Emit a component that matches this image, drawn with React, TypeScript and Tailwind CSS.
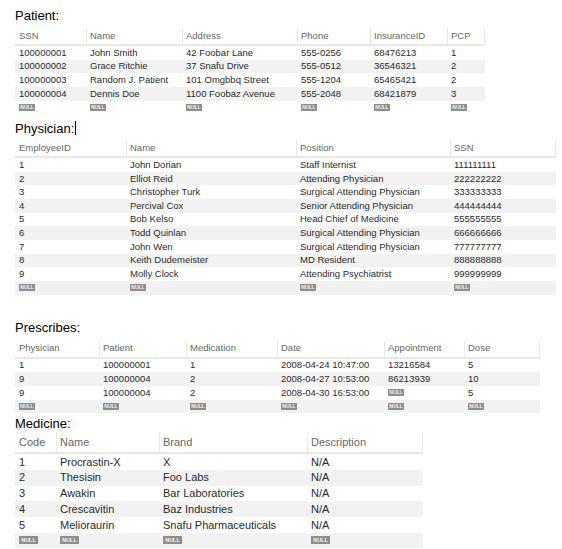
type Cell = string | null;

interface TableProps {
  cols: string[];
  rows: Cell[][];
  grid: string;
  big?: boolean;
}

function NullBadge({ big }: { big?: boolean }) {
  return (
    <span
      className={
        big
          ? "inline-flex h-[8px] w-[19px] items-center justify-center bg-[#8e8e8e] text-[5.5px] font-bold leading-none text-[#f4f4f4]"
          : "inline-flex h-[7px] w-[16px] items-center justify-center bg-[#8e8e8e] text-[5px] font-bold leading-none text-[#f4f4f4]"
      }
    >
      NULL
    </span>
  );
}

function Table({ cols, rows, grid, big }: TableProps) {
  const headH = big ? "h-[20px] text-[11px]" : "h-[16px] text-[9.5px]";
  const rowH = big ? "h-[15.7px] text-[11px]" : "h-[13.65px] text-[9.5px]";
  const allRows: Cell[][] = [...rows, cols.map(() => null)];

  return (
    <div className="w-max">
      <div className={`grid ${grid} border-b-2 border-[#e8e8e8] bg-white`}>
        {cols.map((c, i) => (
          <div
            key={c}
            className={`flex items-center ${headH} text-[#666] ${
              i === 0 ? "pl-1" : "border-l border-[#e8e8e8] pl-[3px]"
            } ${i === cols.length - 1 ? "border-r border-[#e8e8e8]" : ""}`}
          >
            {c}
          </div>
        ))}
      </div>
      {allRows.map((row, r) => (
        <div key={r} className={`grid ${grid} ${r % 2 === 1 ? "bg-[#f2f2f2]" : "bg-white"}`}>
          {row.map((cell, i) => (
            <div key={i} className={`flex items-center whitespace-nowrap ${rowH} pl-1 text-[#2a2a2a]`}>
              {cell === null ? <NullBadge big={big} /> : cell}
            </div>
          ))}
        </div>
      ))}
    </div>
  );
}

function Title({ text, cursor }: { text: string; cursor?: boolean }) {
  return (
    <div className="flex h-[16px] items-center text-[13px] leading-none text-black">
      {text}
      {cursor && <span className="ml-[1px] inline-block h-[14px] w-px bg-black" />}
    </div>
  );
}

export default function App() {
  return (
    <div className="h-[549px] w-[562px] bg-white pl-[15px] font-['Liberation_Sans',Arial,sans-serif]">
      <div className="pt-[7px]">
        <Title text="Patient:" />
      </div>
      <div className="mt-[5px]">
        <Table
          grid="grid-cols-[71px_96px_115px_73px_77px_38px]"
          cols={["SSN", "Name", "Address", "Phone", "InsuranceID", "PCP"]}
          rows={[
            ["100000001", "John Smith", "42 Foobar Lane", "555-0256", "68476213", "1"],
            ["100000002", "Grace Ritchie", "37 Snafu Drive", "555-0512", "36546321", "2"],
            ["100000003", "Random J. Patient", "101 Omgbbq Street", "555-1204", "65465421", "2"],
            ["100000004", "Dennis Doe", "1100 Foobaz Avenue", "555-2048", "68421879", "3"],
          ]}
        />
      </div>

      <div className="mt-[6px]">
        <Title text="Physician:" cursor />
      </div>
      <div className="mt-[4px]">
        <Table
          grid="grid-cols-[111px_170px_154px_106px]"
          cols={["EmployeeID", "Name", "Position", "SSN"]}
          rows={[
            ["1", "John Dorian", "Staff Internist", "111111111"],
            ["2", "Elliot Reid", "Attending Physician", "222222222"],
            ["3", "Christopher Turk", "Surgical Attending Physician", "333333333"],
            ["4", "Percival Cox", "Senior Attending Physician", "444444444"],
            ["5", "Bob Kelso", "Head Chief of Medicine", "555555555"],
            ["6", "Todd Quinlan", "Surgical Attending Physician", "666666666"],
            ["7", "John Wen", "Surgical Attending Physician", "777777777"],
            ["8", "Keith Dudemeister", "MD Resident", "888888888"],
            ["9", "Molly Clock", "Attending Psychiatrist", "999999999"],
          ]}
        />
      </div>

      <div className="mt-[25px]">
        <Title text="Prescribes:" />
      </div>
      <div className="mt-[5px]">
        <Table
          grid="grid-cols-[84px_87px_91px_107px_80px_76px]"
          cols={["Physician", "Patient", "Medication", "Date", "Appointment", "Dose"]}
          rows={[
            ["1", "100000001", "1", "2008-04-24 10:47:00", "13216584", "5"],
            ["9", "100000004", "2", "2008-04-27 10:53:00", "86213939", "10"],
            ["9", "100000004", "2", "2008-04-30 16:53:00", null, "5"],
          ]}
        />
      </div>

      <div className="mt-[2px]">
        <Title text="Medicine:" />
      </div>
      <div className="mt-[1px]">
        <Table
          big
          grid="grid-cols-[41px_103px_148px_116px]"
          cols={["Code", "Name", "Brand", "Description"]}
          rows={[
            ["1", "Procrastin-X", "X", "N/A"],
            ["2", "Thesisin", "Foo Labs", "N/A"],
            ["3", "Awakin", "Bar Laboratories", "N/A"],
            ["4", "Crescavitin", "Baz Industries", "N/A"],
            ["5", "Melioraurin", "Snafu Pharmaceuticals", "N/A"],
          ]}
        />
      </div>
    </div>
  );
}
